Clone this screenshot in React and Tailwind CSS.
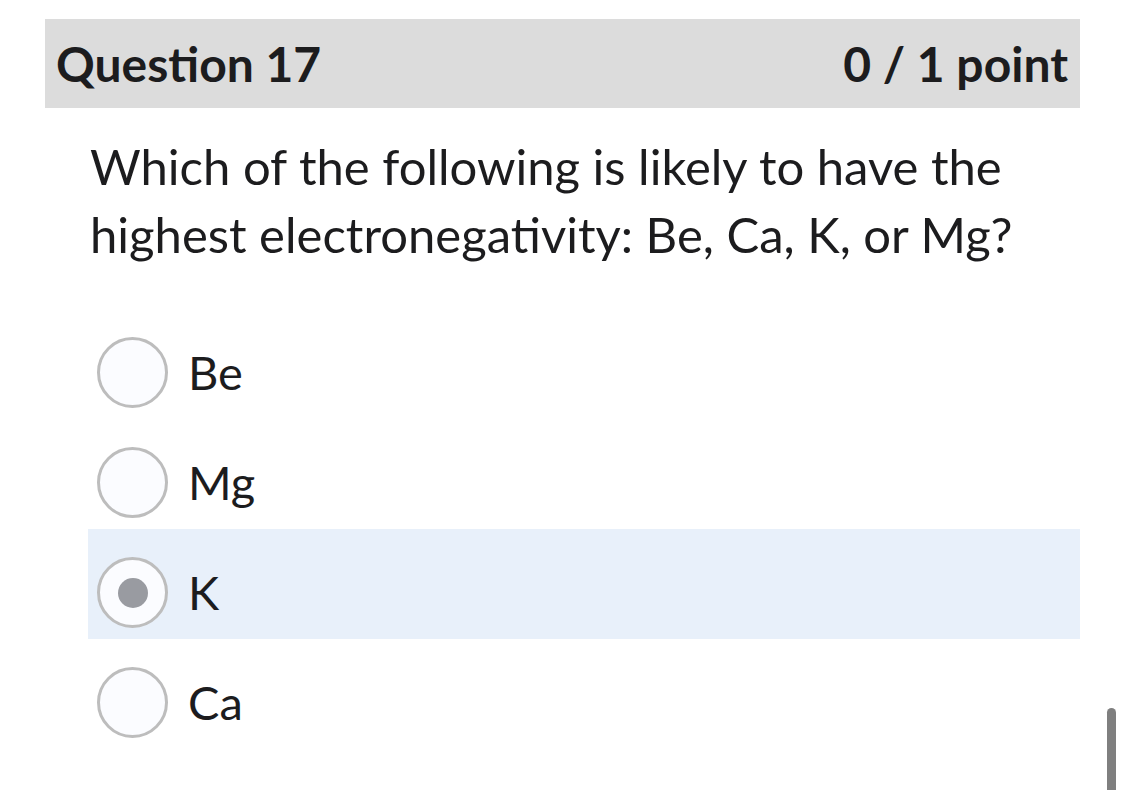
import React, { useState } from "react";

const options = ["Be", "Mg", "K", "Ca"];

const Radio = ({ checked }) => (
	<div className="w-[71px] h-[71px] shrink-0 rounded-full border-[3px] border-[#bdbdbd] bg-[#fbfcff] flex items-center justify-center">
		{checked && <div className="w-[30px] h-[30px] rounded-full bg-[#999ba1]"></div>}
	</div>
);

export default function App() {
	const [selected, setSelected] = useState("K");

	return (
		<div className="relative w-[1125px] h-[790px] overflow-hidden bg-white text-[#1c1c1e] font-['Lato',sans-serif]">
			<div className="px-[45px] pt-[19px]">
				{/* header */}
				<div className="h-[89px] w-[1035px] bg-[#dcdcdc] flex items-center justify-between pl-[11px] pr-[12px] text-[48px] font-bold">
					<span>Question 17</span>
					<span>0 / 1 point</span>
				</div>

				{/* question */}
				<p className="mt-[24px] ml-[45px] w-[990px] text-[49px] leading-[68px]">
					Which of the following is likely to have the highest electronegativity: Be, Ca, K, or Mg?
				</p>

				{/* options */}
				<div className="mt-[41px] ml-[43px] w-[992px] flex flex-col">
					{options.map((opt) => (
						<div
							key={opt}
							onClick={() => setSelected(opt)}
							className={`h-[110px] flex items-start pt-[28px] pl-[9px] gap-[20px] cursor-pointer ${selected === opt ? "bg-[#e8f0fa]" : ""}`}
						>
							<Radio checked={selected === opt} />
							<span className="text-[47px] leading-[71px]">{opt}</span>
						</div>
					))}
				</div>
			</div>

			{/* scrollbar thumb */}
			<div className="absolute left-[1107px] top-[708px] w-[9px] h-[100px] rounded-full bg-[#7f7f7f]"></div>
		</div>
	);
}
